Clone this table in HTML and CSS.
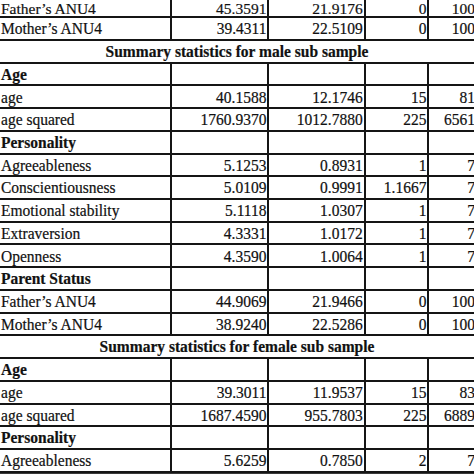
FILE: index.html
```html
<!DOCTYPE html>
<html>
<head>
<meta charset="utf-8">
<link rel="stylesheet" href="styles.css">
</head>
<body>
<div class="page">
  <div class="table">
    <div class="row first"><div class="c lab"><span>Father’s ANU4</span></div><div class="c num"><span>45.3591</span></div><div class="c num"><span>21.9176</span></div><div class="c num"><span>0</span></div><div class="c num"><span>100</span></div></div>
    <div class="row"><div class="c lab"><span>Mother’s ANU4</span></div><div class="c num"><span>39.4311</span></div><div class="c num"><span>22.5109</span></div><div class="c num"><span>0</span></div><div class="c num"><span>100</span></div></div>
    <div class="row title"><div class="c"><span>Summary statistics for male sub sample</span></div></div>
    <div class="row"><div class="c lab b"><span>Age</span></div><div class="c"></div><div class="c"></div><div class="c"></div><div class="c"></div></div>
    <div class="row"><div class="c lab"><span>age</span></div><div class="c num"><span>40.1588</span></div><div class="c num"><span>12.1746</span></div><div class="c num"><span>15</span></div><div class="c num"><span>81</span></div></div>
    <div class="row"><div class="c lab"><span>age squared</span></div><div class="c num"><span>1760.9370</span></div><div class="c num"><span>1012.7880</span></div><div class="c num"><span>225</span></div><div class="c num"><span>6561</span></div></div>
    <div class="row"><div class="c lab b"><span>Personality</span></div><div class="c"></div><div class="c"></div><div class="c"></div><div class="c"></div></div>
    <div class="row"><div class="c lab"><span>Agreeableness</span></div><div class="c num"><span>5.1253</span></div><div class="c num"><span>0.8931</span></div><div class="c num"><span>1</span></div><div class="c num"><span>7</span></div></div>
    <div class="row"><div class="c lab"><span>Conscientiousness</span></div><div class="c num"><span>5.0109</span></div><div class="c num"><span>0.9991</span></div><div class="c num"><span>1.1667</span></div><div class="c num"><span>7</span></div></div>
    <div class="row"><div class="c lab"><span>Emotional stability</span></div><div class="c num"><span>5.1118</span></div><div class="c num"><span>1.0307</span></div><div class="c num"><span>1</span></div><div class="c num"><span>7</span></div></div>
    <div class="row"><div class="c lab"><span>Extraversion</span></div><div class="c num"><span>4.3331</span></div><div class="c num"><span>1.0172</span></div><div class="c num"><span>1</span></div><div class="c num"><span>7</span></div></div>
    <div class="row"><div class="c lab"><span>Openness</span></div><div class="c num"><span>4.3590</span></div><div class="c num"><span>1.0064</span></div><div class="c num"><span>1</span></div><div class="c num"><span>7</span></div></div>
    <div class="row"><div class="c lab b"><span>Parent Status</span></div><div class="c"></div><div class="c"></div><div class="c"></div><div class="c"></div></div>
    <div class="row"><div class="c lab"><span>Father’s ANU4</span></div><div class="c num"><span>44.9069</span></div><div class="c num"><span>21.9466</span></div><div class="c num"><span>0</span></div><div class="c num"><span>100</span></div></div>
    <div class="row"><div class="c lab"><span>Mother’s ANU4</span></div><div class="c num"><span>38.9240</span></div><div class="c num"><span>22.5286</span></div><div class="c num"><span>0</span></div><div class="c num"><span>100</span></div></div>
    <div class="row title"><div class="c"><span>Summary statistics for female sub sample</span></div></div>
    <div class="row"><div class="c lab b"><span>Age</span></div><div class="c"></div><div class="c"></div><div class="c"></div><div class="c"></div></div>
    <div class="row"><div class="c lab"><span>age</span></div><div class="c num"><span>39.3011</span></div><div class="c num"><span>11.9537</span></div><div class="c num"><span>15</span></div><div class="c num"><span>83</span></div></div>
    <div class="row"><div class="c lab"><span>age squared</span></div><div class="c num"><span>1687.4590</span></div><div class="c num"><span>955.7803</span></div><div class="c num"><span>225</span></div><div class="c num"><span>6889</span></div></div>
    <div class="row"><div class="c lab b"><span>Personality</span></div><div class="c"></div><div class="c"></div><div class="c"></div><div class="c"></div></div>
    <div class="row"><div class="c lab"><span>Agreeableness</span></div><div class="c num"><span>5.6259</span></div><div class="c num"><span>0.7850</span></div><div class="c num"><span>2</span></div><div class="c num"><span>7</span></div></div>
    <div class="edge"></div>
  </div>
</div>
</body>
</html>
```
FILE: styles.css
```css
html, body {
  margin: 0;
  padding: 0;
  background: #ffffff;
}
.page {
  width: 474px;
  height: 474px;
  overflow: hidden;
}
.table {
  width: 478px;
  font-family: "Liberation Serif", "Times New Roman", serif;
  font-size: 15.5px;
  color: #111111;
  -webkit-text-stroke: 0.2px #111111;
}
.row {
  display: grid;
  grid-template-columns: 172.3px 97.2px 96.2px 63.8px 48.5px;
  height: 22.72px;
}
.row.first {
  height: 18.3px;
}
.c {
  box-sizing: border-box;
  border-bottom: 2px solid #151515;
  border-right: 2px solid #151515;
  line-height: 19.6px;
  padding-top: 1px;
  white-space: nowrap;
  display: flex;
  align-items: flex-end;
}
.c span {
  display: inline-block;
  transform: scaleY(1.08);
  transform-origin: 50% 15px;
}
.row.first .c {
  line-height: 14px;
  padding-top: 0;
  padding-bottom: 0.5px;
}
.row.first .c span {
  transform: none;
}
.lab {
  padding-left: 1px;
}
.num {
  justify-content: flex-end;
  padding-right: 1px;
}
.b {
  font-weight: bold;
}
.row.title {
  grid-template-columns: 1fr;
}
.row.title .c {
  border-right: none;
  justify-content: center;
  font-weight: bold;
  padding-right: 4px;
}
.row.title .c span {
  transform: scaleY(1.12);
}
.edge {
  height: 6px;
  background: #3a3a3a;
}
```
